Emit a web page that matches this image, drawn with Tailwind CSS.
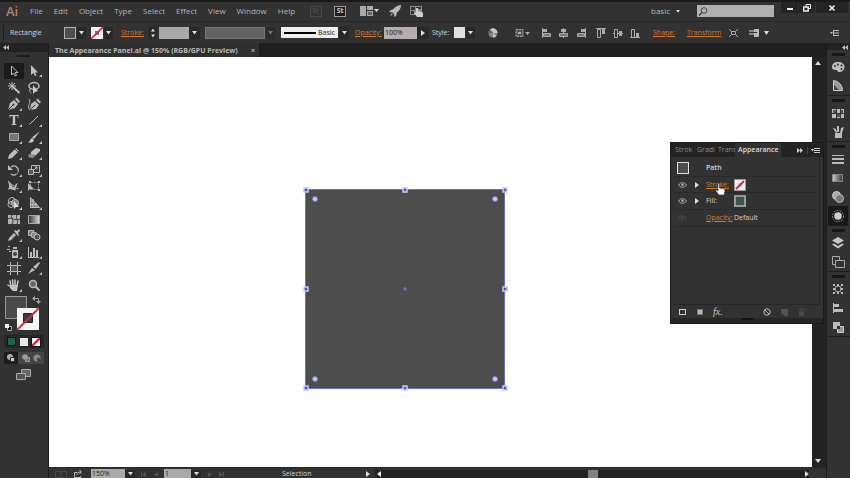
<!DOCTYPE html>
<html lang="en">
<head>
  <meta charset="UTF-8">
  <title>The Appearance Panel.ai</title>
  <meta name="viewport" content="width=device-width, initial-scale=1.0">
  <script src="https://cdn.jsdelivr.net/npm/@tailwindcss/browser@4"></script>
</head>

<body class="bg-[#222] font-['Open_Sans','Noto_Sans',sans-serif] text-[7px] leading-[10px] text-[#d4d4d4]">
<!-- shared shapes -->
<svg class="hidden">
  <symbol id="caret" viewBox="0 0 5 4"><path fill="#ddd" d="M0 0h5L2.500 3.500z"/></symbol>
  <symbol id="eye" viewBox="0 0 9 6"><path fill="none" stroke="#aaa" d="M.500 3c2-3 6-3 8 0-2 3-6 3-8 0z"/><circle cx="4.500" cy="2.800" r="1.200" fill="#aaa"/></symbol>
  <symbol id="play" viewBox="0 0 4 6"><path fill="#ddd" d="M0 0v6l4-3z"/></symbol>
  <symbol id="collapse" viewBox="0 0 6 5"><path fill="#bbb" d="M3 0v5L0 2.500zM6 0v5L3 2.500z"/></symbol>
</svg>

<div class="relative flex h-screen flex-col overflow-hidden">

  <!-- menu bar -->
  <header class="flex h-[22px] shrink-0 items-center border-t-2 border-b border-t-[#1a1a1a] border-b-[#262626] bg-[#323232] pb-px text-[8px] text-[#b4b4b4]">
    <span class="w-[30px] shrink-0 pl-[6px] text-[13px] leading-[18px] font-semibold text-[#b88468]">Ai</span>
    <nav class="flex gap-[11px]">
      <button>File</button>
      <button>Edit</button>
      <button>Object</button>
      <button>Type</button>
      <button>Select</button>
      <button>Effect</button>
      <button>View</button>
      <button>Window</button>
      <button>Help</button>
    </nav>
    <div class="ml-[15px] flex items-center">
      <button aria-label="Bridge" class="h-[11px] w-[12px] border border-[#484848] text-[7px] leading-[8px] text-[#555]">Br</button>
      <button aria-label="Stock" class="ml-[12px] h-[11px] w-[12px] border border-[#999] bg-[#1c1c1c] text-[7px] leading-[8px] font-bold text-[#ccc]">St</button>
      <button aria-label="Arrange documents" class="ml-[14px]">
        <svg class="h-[12px] w-[20px]" viewBox="0 0 20 12"><path fill="#aaa" d="M0 1h6v10H0zM7 1h6v4H7zM7 6h6v5H7z"/><path fill="#666" d="M8 7h4v3H8z"/><path fill="#ddd" d="M14 4h5l-2.500 3z"/></svg>
      </button>
      <button aria-label="GPU performance" class="ml-[9px]">
        <svg class="h-[12px] w-[12px]" viewBox="0 0 12 12"><path fill="#b8b8b8" d="M12 0C8 .5 6 2 4.500 4L1 5.500 0 7l3 .200L5 9l.300 3L7 11l1-3.500C10.500 5.500 12 3 12 0z"/><path fill="#999" d="M2.500 8 4 9.500 1 11.500z"/></svg>
      </button>
      <button aria-label="Touch workspace" class="ml-[9px]">
        <svg class="h-[12px] w-[14px]" viewBox="0 0 14 12"><path fill="#888" d="M0 1h12v9H0z"/><path fill="#333" d="M1 2h4v3H1zM6 2h5v2H6zM1 6h3v3H1z"/><path fill="#ccc" d="M6 3h2v3l4 1 1 1v4H7L4 8l1-1 1 1z"/></svg>
      </button>
    </div>
    <select aria-label="Workspace" class="ml-auto w-[20px] appearance-none">
      <option>basic</option>
    </select>
    <svg class="ml-[5px] h-[3px] w-[4px]"><use href="#caret"/></svg>
    <div class="ml-[17px] flex h-[12px] w-[77px] items-center bg-[#b0b0b0]">
      <svg class="ml-px h-[9px] w-[10px]" viewBox="0 0 10 9" fill="none" stroke="#444"><circle cx="6" cy="3.500" r="2.800"/><path d="M4 5.500 1 8.500" stroke-width="1.500"/></svg>
      <input aria-label="Search" class="w-[60px] text-[#222] outline-none">
    </div>
    <div class="mr-[2px] ml-[7px] flex h-[11px] gap-px self-start">
      <button aria-label="Minimize" class="grid w-[17px] place-items-center bg-[#242424]">
        <svg class="h-[8px] w-[8px]" viewBox="0 0 8 8"><path fill="#eee" d="M1 4h6v2H1z"/></svg>
      </button>
      <button aria-label="Restore" class="grid w-[16px] place-items-center bg-[#242424]">
        <svg class="h-[8px] w-[8px]" viewBox="0 0 8 8" fill="none" stroke="#eee"><path d="M3 2.500V.500h4.500v4H6"/><path stroke-width="1.500" d="M.700 3h4.500v4H.700z"/></svg>
      </button>
      <button aria-label="Close" class="grid w-[32px] place-items-center bg-[#242424]">
        <svg class="h-[8px] w-[8px]" viewBox="0 0 8 8"><path stroke="#eee" stroke-width="1.600" d="m1.500 1.500 5 5m0-5-5 5"/></svg>
      </button>
    </div>
  </header>

  <!-- control bar -->
  <div class="flex h-[21px] shrink-0 items-center bg-[#323232] pl-[3px]">
    <div class="h-[15px] w-px shrink-0 bg-[#1e1e1e]"></div>
    <span class="ml-[6px] w-[54px] shrink-0">Rectangle</span>
    <button aria-label="Fill colour" class="h-[12px] w-[12px] shrink-0 border border-[#b0b0b0] bg-[#4e4e4e]"></button>
    <button aria-label="Fill options" class="ml-px grid h-[12px] w-[9px] shrink-0 place-items-center bg-[#282828]"><svg class="h-[4px] w-[5px]"><use href="#caret"/></svg></button>
    <button aria-label="Stroke colour" class="ml-[5px] shrink-0"><svg class="h-[12px] w-[12px]" viewBox="0 0 12 12"><path fill="#f4f4f4" d="M0 0h12v12H0z"/><path fill="#777" d="M4 4h4v4H4z"/><path stroke="#d02840" stroke-width="1.600" d="M0 12 12 0"/></svg></button>
    <button aria-label="Stroke options" class="ml-px grid h-[12px] w-[9px] shrink-0 place-items-center bg-[#282828]"><svg class="h-[4px] w-[5px]"><use href="#caret"/></svg></button>
    <label for="weight" class="ml-[8px] w-[28px] shrink-0 text-[#d07a30] underline">Stroke:</label>
    <button aria-label="Change weight" class="shrink-0"><svg class="h-[12px] w-[8px]" viewBox="0 0 8 12"><path fill="#282828" d="M0 0h8v12H0z"/><path fill="#ddd" d="M2 4.500h4L4 1.500zM2 7.500h4l-2 3z"/></svg></button>
    <input id="weight" class="ml-[2px] h-[12px] w-[30px] shrink-0 bg-[#a8a8a8] text-[#222]">
    <button aria-label="Weights" class="grid h-[12px] w-[11px] shrink-0 place-items-center bg-[#282828]"><svg class="h-[4px] w-[5px]"><use href="#caret"/></svg></button>
    <input aria-label="Width profile" disabled class="ml-[5px] h-[12px] w-[60px] shrink-0 border border-[#777] bg-[#626262]">
    <button aria-label="Profiles" class="ml-px grid h-[12px] w-[9px] shrink-0 place-items-center bg-[#2c2c2c]"><svg class="h-[4px] w-[5px] opacity-40"><use href="#caret"/></svg></button>
    <button class="ml-[6px] flex h-[11px] w-[57px] shrink-0 items-center gap-[2px] bg-[#eee] pl-[3px] text-[#222]"><span class="h-[2px] w-[32px] bg-black"></span>Basic</button>
    <button aria-label="Brushes" class="ml-px grid h-[12px] w-[10px] shrink-0 place-items-center bg-[#282828]"><svg class="h-[4px] w-[5px]"><use href="#caret"/></svg></button>
    <label for="opacity" class="ml-[6px] w-[29px] shrink-0 text-[#d07a30] underline">Opacity:</label>
    <input id="opacity" value="100%" class="h-[12px] w-[33px] shrink-0 bg-[#b4aeae] pl-px text-[#222]">
    <button aria-label="Opacity slider" class="grid h-[12px] w-[12px] shrink-0 place-items-center bg-[#282828]"><svg class="h-[6px] w-[4px]"><use href="#play"/></svg></button>
    <label for="style" class="ml-[3px] w-[22px] shrink-0">Style:</label>
    <button id="style" class="h-[11px] w-[11px] shrink-0 bg-[#e0e0e0]"></button>
    <button aria-label="Styles" class="ml-px grid h-[12px] w-[9px] shrink-0 place-items-center bg-[#282828]"><svg class="h-[4px] w-[5px]"><use href="#caret"/></svg></button>

    <button aria-label="Recolor artwork" class="ml-[13px] shrink-0"><svg class="h-[10px] w-[10px]" viewBox="0 0 10 10"><circle cx="5" cy="5" r="4.500" fill="#888"/><path fill="#c4c4c4" d="M5 5 2 1.500A4.500 4.500 0 0 1 9.500 5zM5 5v4.500A4.500 4.500 0 0 0 8.500 8z"/><path fill="#666" d="M5 5H.500A4.500 4.500 0 0 1 2 1.500z"/></svg></button>
    <button aria-label="Align to" class="ml-[17px] shrink-0"><svg class="h-[10px] w-[15px]" viewBox="0 0 15 10"><path fill="#555" stroke="#aaa" stroke-dasharray="2 1" d="M1 1.500h7v7H1z"/><path fill="#aaa" d="M3 4h3v2H3zM10 4h5l-2.500 3z"/></svg></button>

    <div class="ml-[12px] flex shrink-0 gap-[7px]">
      <button aria-label="Align left"><svg class="h-[10px] w-[10px]" viewBox="0 0 10 10"><path fill="#aaa" d="M0 0h1v10H0zM1 1h4v3H1z"/><path fill="#777" stroke="#aaa" d="M1.500 5.500h7v3h-7z"/></svg></button>
      <button aria-label="Align centre"><svg class="h-[10px] w-[10px]" viewBox="0 0 10 10"><path fill="#aaa" d="M4 0h1v10H4zM2 1h5v3H2z"/><path fill="#777" stroke="#aaa" d="M.500 5.500h8v3h-8z"/></svg></button>
      <button aria-label="Align right"><svg class="h-[10px] w-[10px]" viewBox="0 0 10 10"><path fill="#aaa" d="M9 0h1v10H9zM5 1h4v3H5z"/><path fill="#777" stroke="#aaa" d="M1.500 5.500h7v3h-7z"/></svg></button>
    </div>
    <div class="ml-[10px] flex shrink-0 gap-[7px]">
      <button aria-label="Align top"><svg class="h-[10px] w-[10px]" viewBox="0 0 10 10"><path fill="#aaa" d="M0 0h10v1H0zM6 1h3v5H6z"/><path fill="none" stroke="#aaa" d="M1.500 1.500h3v8h-3z"/></svg></button>
      <button aria-label="Align middle"><svg class="h-[10px] w-[10px]" viewBox="0 0 10 10"><path fill="#aaa" d="M0 5h10v1H0zM6 3h3v5H6z"/><path fill="#323232" stroke="#aaa" d="M1.500 1.500h3v8h-3z"/></svg></button>
      <button aria-label="Align bottom"><svg class="h-[10px] w-[10px]" viewBox="0 0 10 10"><path fill="#aaa" d="M0 9h10v1H0zM6 5h3v4H6z"/><path fill="none" stroke="#aaa" d="M1.500 1.500h3v8h-3z"/></svg></button>
    </div>

    <a href="#" class="ml-[13px] w-[34px] shrink-0 text-[#d07a30] underline">Shape:</a>
    <a href="#" class="w-[41px] shrink-0 text-[#d07a30] underline">Transform</a>
    <button aria-label="Isolate" class="shrink-0"><svg class="h-[10px] w-[11px]" viewBox="0 0 11 10" fill="none" stroke="#aaa"><path d="M3.500 3.500h4v3h-4zM1 1l2.500 2.500M10 1 7.500 3.500M1 9l2.500-2.500M10 9 7.500 6.500"/></svg></button>
    <button aria-label="Select similar" class="ml-[10px] shrink-0"><svg class="h-[10px] w-[20px]" viewBox="0 0 20 10"><path fill="#888" d="M0 2h6v2H0zM0 5h6v2H0z"/><path fill="#bbb" d="M5 1h5v3H5zM5 5h4v4H5zM10 2v7l-3-3z"/><path fill="#ddd" d="M15 3h5l-2.500 4z"/></svg></button>
    <button aria-label="Panel menu" class="mr-[11px] ml-auto shrink-0"><svg class="h-[8px] w-[9px]" viewBox="0 0 9 8" fill="#bbb"><path d="M0 3h3L1.500 5zM4 1h5v1H4zM4 3.500h5v1H4zM4 6h5v1H4zM3 1h1v6H3z"/></svg></button>
  </div>

  <div class="flex min-h-0 flex-1">

    <!-- tools -->
    <aside class="flex w-[49px] shrink-0 flex-col border-r border-[#1c1c1c] bg-[#323232]">
      <button aria-label="Collapse tools" class="h-[9px] w-full shrink-0 bg-[#222] pl-[3px]"><svg class="h-[5px] w-[6px]"><use href="#collapse"/></svg></button>
      <div class="mt-[3px] mb-[6px] ml-[17px] h-[2px] w-[13px] shrink-0 bg-[#1c1c1c]"></div>

      <div class="ml-[4px] grid h-[230px] w-[40px] shrink-0 grid-cols-2 grid-rows-14 [&_button]:grid [&_button]:place-items-center [&_svg]:h-[14px] [&_svg]:w-[16px]">
        <button aria-label="Selection" class="bg-[#1b1b1b]"><svg viewBox="0 0 16 14" fill="none" stroke="#c0c0c0"><path d="M5.500 2v9l2-2 1.500 3 1.500-.700-1.300-2.800H12z"/></svg></button>
        <button aria-label="Direct selection"><svg viewBox="0 0 16 14" fill="#c0c0c0"><path d="M5 1v10l2.500-2 1.500 3 1.500-.700L9 8.500h3zM13 13h3v-3z"/></svg></button>
        <button aria-label="Magic wand"><svg viewBox="0 0 16 14" stroke="#c0c0c0" fill="none"><path stroke-width="2" d="m7 6 6.500 6"/><path d="M6 1v8M2 5h8M3 2l6 6M9 2 3 8"/></svg></button>
        <button aria-label="Lasso"><svg viewBox="0 0 16 14" fill="none" stroke="#bbb"><ellipse cx="8" cy="5" rx="5" ry="3.500" stroke-width="1.500"/><path d="M4 8c-1 2 0 3 1.500 4"/><path fill="#ccc" stroke="none" d="M7 4v9l2-2 3-1z"/></svg></button>
        <button aria-label="Pen"><svg viewBox="0 0 16 14" fill="#bbb"><path d="M2 13 4 6l4-3 4 4-3 4zM9 2l1.500-1.500L14 4.500 12.500 6zM13 14h3v-3z"/><path stroke="#323232" d="m2 13 5-5"/><circle cx="7.500" cy="7.500" r="1" fill="#323232"/></svg></button>
        <button aria-label="Curvature"><svg viewBox="0 0 16 14" fill="#bbb"><path d="m4 13 1-6 4-3 4 4-3 4zM10 3l1.500-1.500L15 5l-1.500 1.500z"/><path fill="none" stroke="#bbb" d="M4 13C0 8 6 7 3 2"/><path stroke="#323232" d="m4 13 5-5"/></svg></button>
        <button aria-label="Type"><svg viewBox="0 0 16 14" fill="#ccc"><text x="8" y="12" text-anchor="middle" font-family="Liberation Serif, serif" font-size="14" font-weight="bold">T</text><path d="M13 14h3v-3z"/></svg></button>
        <button aria-label="Line"><svg viewBox="0 0 16 14"><path stroke="#bbb" d="M3.500 11.500 12 3"/><path fill="#bbb" d="M13 14h3v-3z"/></svg></button>
        <button aria-label="Rectangle"><svg viewBox="0 0 16 14"><path fill="#777" stroke="#aaa" d="M3.500 3.500h9v7h-9z"/><path fill="#bbb" d="M13 14h3v-3z"/></svg></button>
        <button aria-label="Paintbrush"><svg viewBox="0 0 16 14" fill="#c8c8c8"><path d="M14 1 8 9 6 7.500zM6 8l2 2c-1 3-4 3-6 2 2 0 2-3 4-4zM13 14h3v-3z"/></svg></button>
        <button aria-label="Pencil"><svg viewBox="0 0 16 14" fill="#bbb"><path d="m2 13 1-4 7-7 3 3-7 7zM13 14h3v-3z"/><path stroke="#323232" d="m9 3 3 3"/></svg></button>
        <button aria-label="Eraser"><svg viewBox="0 0 16 14"><path fill="#888" d="m2 9 4-2 5 1-4 4-4-.500z"/><path fill="#c4c4c4" d="m5 6 5-4 4 1v2l-4 4-5-1z"/><path fill="#bbb" d="M13 14h3v-3z"/></svg></button>
        <button aria-label="Rotate"><svg viewBox="0 0 16 14"><path fill="none" stroke="#bbb" stroke-width="1.300" d="M5 4a4.500 4.500 0 1 1 0 7" stroke-dasharray="11 1 1 1"/><path fill="#bbb" d="M2 2v5h5zM13 14h3v-3z"/></svg></button>
        <button aria-label="Scale"><svg viewBox="0 0 16 14" fill="none" stroke="#bbb"><path d="M5.500 2.500h8v7h-8z"/><path fill="#555" d="M2.500 6.500h5v5h-5z"/><path d="m8 7 3-3M8.500 4H11v2.500"/><path fill="#bbb" stroke="none" d="M13 14h3v-3z"/></svg></button>
        <button aria-label="Width"><svg viewBox="0 0 16 14"><path fill="#bbb" d="M2 3c3 0 3 4 5 5s2-4 5-4c-2 2-1 6-4 7-3 0-3-2-6 0 1-3 2-4 0-8z"/><path fill="none" stroke="#bbb" d="M2 2c2 1 3 4 6 5M8 11c2 0 3-3 5-1"/><path fill="#bbb" d="M13 14h3v-3z"/></svg></button>
        <button aria-label="Free transform"><svg viewBox="0 0 16 14"><path fill="none" stroke="#999" stroke-dasharray="2 1" d="M4.500 3.500h8v7h-8z"/><path fill="#bbb" d="M3 2h2v2H3zM12 2h2v2h-2zM12 10h2v2h-2zM2 4v8l2-2h4z"/></svg></button>
        <button aria-label="Shape builder"><svg viewBox="0 0 16 14" fill="none" stroke="#bbb"><circle cx="6" cy="5" r="3.500"/><circle cx="9" cy="7" r="3.500" fill="#777"/><circle cx="5" cy="8.500" r="3"/><path fill="#ddd" stroke="none" d="M8 5v8l2-2h3zM13 14h3v-3z"/></svg></button>
        <button aria-label="Perspective grid"><svg viewBox="0 0 16 14" fill="none" stroke="#bbb"><path fill="#777" d="M4.500 1.500v10h9zM7 3v9M10 7v5M4 5h4M4 8.500h7"/><path fill="#bbb" stroke="none" d="M13 14h3v-3z"/></svg></button>
        <button aria-label="Mesh"><svg viewBox="0 0 16 14"><path fill="#b4b4b4" d="M2 3h12v9H2z"/><path fill="none" stroke="#333" d="M2 7c4-3 7 3 12 0M6 3c-2 4 3 5 0 9M11 3c-2 4 2 5 0 9"/></svg></button>
        <button aria-label="Gradient"><svg viewBox="0 0 16 14"><defs><linearGradient id="gt"><stop stop-color="#333"/><stop offset="1" stop-color="#ddd"/></linearGradient></defs><path fill="url(#gt)" stroke="#aaa" d="M2.500 3.500h11v8h-11z"/></svg></button>
        <button aria-label="Eyedropper"><svg viewBox="0 0 16 14" fill="#bbb"><path d="m2 13 1-3 5-5 2 2-5 5zM8 3l1-1 2 1 2-2 1 2-2 2 1 2-1 1zM13 14h3v-3z"/></svg></button>
        <button aria-label="Blend"><svg viewBox="0 0 16 14" stroke="#bbb"><path fill="#777" d="M2.500 2.500h5v5h-5z"/><circle cx="8" cy="7" r="3" fill="#888"/><circle cx="11" cy="9" r="3" fill="#555"/></svg></button>
        <button aria-label="Symbol sprayer"><svg viewBox="0 0 16 14" fill="#bbb"><path d="M6 5h6v8H6zM7 2h4v2H7zM2 1h2v1H2zM1 4h3v1H1zM3 6h2v1H3zM13 14h3v-3z"/><circle cx="9" cy="9" r="2" fill="#444"/></svg></button>
        <button aria-label="Graph"><svg viewBox="0 0 16 14" fill="#bbb"><path d="M2 2h1v10h10v1H2zM4 7h2v5H4zM7 3h2v9H7zM10 5h2v7h-2zM13 14h3v-3z"/></svg></button>
        <button aria-label="Artboard"><svg viewBox="0 0 16 14" fill="none" stroke="#bbb"><path fill="#555" d="M4.500 4.500h7v6h-7z"/><path d="M4.500 1v3M11.500 1v3M4.500 11v3M11.500 11v3M1 4.500h3M12 4.500h3M1 10.500h3M12 10.500h3"/></svg></button>
        <button aria-label="Slice"><svg viewBox="0 0 16 14" fill="#bbb"><path d="m2 13 4-6 3 2zM7 6l6-5 1 1-4 6zM13 14h3v-3z"/></svg></button>
        <button aria-label="Hand"><svg viewBox="0 0 16 14"><path fill="none" stroke="#c4c4c4" stroke-width="1.500" stroke-linecap="round" d="M5 8 4 3M7 7 6.500 2M9 7V2M11 8l1-5M5 9 2 7"/><path fill="#c4c4c4" d="M4 7h8l-1 6H7L4 10zM13 14h3v-3z"/></svg></button>
        <button aria-label="Zoom"><svg viewBox="0 0 16 14"><circle cx="7" cy="6" r="3.500" fill="#666" stroke="#bbb" stroke-width="1.500"/><path stroke="#bbb" stroke-width="2" d="m9.500 8.500 4 4"/></svg></button>
      </div>

      <!-- fill and stroke -->
      <div class="ml-[4px] flex w-[40px] shrink-0 flex-col">
        <svg class="h-[39px] w-[40px]" viewBox="0 0 40 39">
          <path fill="#4a4a4a" stroke="#999" d="M1.500 3.500h21v22h-21z"/>
          <path fill="#f6f6f6" d="M13 15h22v22H13z"/>
          <path fill="#3c3c3c" stroke="#222" d="M19.500 20.500h9v9h-9z"/>
          <path stroke="#d02838" stroke-width="1.800" d="M13 37 35 15"/>
          <path fill="none" stroke="#aaa" d="M30 5.500h4.500V9"/><path fill="#aaa" d="m28 5.500 3-2.500v5zM32 8h5l-2.500 3z"/>
          <path fill="#111" stroke="#aaa" d="M3.500 33.500h4v4h-4z"/><path fill="#eee" d="M1 31h4v4H1z"/>
        </svg>
        <div class="mt-[3px] flex h-[13px] items-center justify-between border border-[#242424] bg-[#2a2a2a] px-[2px]">
          <button aria-label="Color" class="h-[9px] w-[9px] border border-[#111] bg-[#1c6450]"></button>
          <button aria-label="Gradient fill" class="h-[8px] w-[8px] bg-[#e8e8e8]"></button>
          <button aria-label="None" class="bg-[#111] p-px"><svg class="h-[8px] w-[8px]" viewBox="0 0 8 8"><path fill="#f6f6f6" d="M0 0h8v8H0z"/><path stroke="#d01828" stroke-width="2" d="M0 8 8 0"/></svg></button>
        </div>
        <div class="mt-[4px] flex h-[12px] items-center justify-between bg-[#454545]">
          <button aria-label="Draw normal" class="grid h-full w-[14px] place-items-center bg-[#1c1c1c]"><svg class="h-[8px] w-[8px]" viewBox="0 0 8 8"><circle cx="3" cy="3" r="3" fill="#aaa"/><path fill="#ccc" stroke="#333" d="M3.500 3.500h4v4h-4z"/></svg></button>
          <button aria-label="Draw behind"><svg class="h-[8px] w-[8px]" viewBox="0 0 8 8"><path fill="#777" stroke="#999" d="M3.500 3.500h4v4h-4z"/><circle cx="3" cy="3" r="2.800" fill="#999"/></svg></button>
          <button aria-label="Draw inside" class="mr-[3px]"><svg class="h-[8px] w-[8px]" viewBox="0 0 8 8"><circle cx="4" cy="4" r="3.500" fill="#888"/><path fill="#444" d="M4 4h3v3H4z"/></svg></button>
        </div>
        <button aria-label="Screen mode" class="mt-[5px] mr-[2px] self-center"><svg class="h-[11px] w-[15px]" viewBox="0 0 15 11"><path fill="#666" stroke="#aaa" d="M5.500.500h9v7h-9z"/><path fill="#555" stroke="#aaa" d="M.500 4.500h9v6h-9z"/></svg></button>
      </div>
    </aside>

    <!-- document -->
    <main class="flex min-w-0 flex-1 flex-col">
      <div class="flex h-[14px] shrink-0 bg-[#1f1f1f]">
        <div class="flex w-[210px] items-center justify-between bg-[#303030] pt-px pr-[4px] pl-[6px] font-bold whitespace-nowrap text-[#b8b8b8]">
          <span>The Appearance Panel.ai @ 150% (RGB/GPU Preview)</span>
          <button aria-label="Close document">×</button>
        </div>
      </div>
      <div class="flex min-h-0 flex-1">
        <div class="relative min-w-0 flex-1 overflow-hidden bg-white">
          <svg class="absolute top-[127px] left-[251px] h-[210px] w-[210px]" viewBox="0 0 210 210">
            <path fill="#4d4d4d" stroke="#6674c8" d="M5.500 5.500h199v199H5.500z"/>
            <g fill="#4d58b0" stroke="#c4ccf8" stroke-width="1.500">
              <path d="M4 4h4v4H4zM103 4h4v4h-4zM203 4h4v4h-4zM4 103h4v4H4zM203 103h4v4h-4zM4 202h4v4H4zM103 202h4v4h-4zM203 202h4v4h-4z"/>
            </g>
            <g fill="#c4ccf8" stroke="#7480cc"><circle cx="15" cy="15" r="2.500"/><circle cx="195" cy="15" r="2.500"/><circle cx="15" cy="195" r="2.500"/><circle cx="195" cy="195" r="2.500"/></g>
            <circle cx="105" cy="105" r="1.700" fill="#6678d0"/>
          </svg>
        </div>
        <!-- vertical scrollbar -->
        <div class="flex w-[14px] shrink-0 flex-col items-center justify-between bg-[#232323] py-[4px] pr-[3px]">
          <button aria-label="Scroll up"><svg class="h-[4px] w-[6px]" viewBox="0 0 6 4"><path fill="#ddd" d="M0 4h6L3 0z"/></svg></button>
          <button aria-label="Scroll down"><svg class="h-[4px] w-[6px]" viewBox="0 0 6 4"><path fill="#ddd" d="M0 0h6L3 4z"/></svg></button>
        </div>
      </div>

      <!-- status bar -->
      <footer class="flex h-[11px] shrink-0 items-center border-t border-[#262626] bg-[#323232] pt-[2px]">
        <svg class="ml-[6px] h-[7px] w-[12px] shrink-0" viewBox="0 0 12 7"><path fill="none" stroke="#4a4a4a" d="M.500.500h11v6H.500zM6 0v7"/></svg>
        <button aria-label="Share" class="ml-[7px] shrink-0"><svg class="h-[8px] w-[8px]" viewBox="0 0 8 8" fill="none" stroke="#bbb"><path d="M3 2.500H.500v5h6V6M3 5c0-2 1-3 4-3M5.500 0 7.500 2l-2 2"/></svg></button>
        <input aria-label="Zoom level" value="150%" class="ml-[9px] h-[10px] w-[34px] shrink-0 bg-[#aaa] pl-px text-[#222]">
        <button aria-label="Zoom levels" class="grid h-full w-[10px] shrink-0 place-items-center bg-[#282828]"><svg class="h-[4px] w-[5px]"><use href="#caret"/></svg></button>
        <svg class="ml-[6px] h-[5px] w-[18px] shrink-0" viewBox="0 0 18 5"><path fill="#555" d="M0 0h1v5H0zM5 0v5L1 2.500zM17 0v5l-4-2.500z"/></svg>
        <input aria-label="Artboard number" value="1" class="ml-[5px] h-[10px] w-[27px] shrink-0 bg-[#aaa] pl-px text-[#222]">
        <button aria-label="Artboards" class="grid h-full w-[10px] shrink-0 place-items-center bg-[#282828]"><svg class="h-[4px] w-[5px]"><use href="#caret"/></svg></button>
        <svg class="ml-[7px] h-[5px] w-[18px] shrink-0" viewBox="0 0 18 5"><path fill="#555" d="M0 0v5l4-2.500zM11 0v5l4-2.500zM15 0h1v5h-1z"/></svg>
        <span class="ml-[56px] w-[84px] shrink-0">Selection</span>
        <button aria-label="Status menu" class="shrink-0"><svg class="h-[6px] w-[4px]"><use href="#play"/></svg></button>
        <div class="ml-[5px] flex h-full flex-1 items-center justify-between bg-[#222] pl-[2px]">
          <button aria-label="Scroll left"><svg class="h-[6px] w-[4px]" viewBox="0 0 4 6"><path fill="#eee" d="M4 0v6L0 3z"/></svg></button>
          <div class="h-full w-[10px] bg-[#808080]"></div>
          <button aria-label="Scroll right"><svg class="h-[6px] w-[4px]"><use href="#play"/></svg></button>
        </div>
        <div class="h-full w-[17px] shrink-0"></div>
      </footer>
    </main>

    <!-- panel dock -->
    <aside class="flex w-[24px] shrink-0 flex-col border-l border-[#1c1c1c] bg-[#323232] [&_button]:grid [&_button]:h-[19px] [&_button]:w-[20px] [&_button]:place-items-center [&_button_svg]:h-[14px] [&_button_svg]:w-[14px] [&_section]:border-b [&_section]:border-[#1e1e1e] [&_section]:pl-px">
      <div class="flex h-[7px] shrink-0 justify-end bg-[#222] pt-[2px] pr-[2px]"><svg class="h-[5px] w-[6px]"><use href="#collapse"/></svg></div>
      <section>
        <div class="h-[7px] pt-[3px] pl-[4px]"><div class="h-[3px] w-[13px] bg-[#181818]"></div></div>
        <button aria-label="Color"><svg viewBox="0 0 14 14"><path fill="#bbb" d="M7 2c4 0 6.500 2 6.500 5S11 12 8 12c-2 0-1-2-3-2s-4 0-4-3 2-5 6-5z"/><g fill="#333"><circle cx="4" cy="6" r="1"/><circle cx="7" cy="4.500" r="1"/><circle cx="10.500" cy="5.500" r="1"/><circle cx="10.500" cy="9" r="1"/></g></svg></button>
        <button aria-label="Color guide"><svg viewBox="0 0 14 14"><path fill="#999" stroke="#ccc" d="M2.500 1.500v10h9a10 10 0 0 0-9-10z"/><path fill="#444" d="M3 11V6l5 5z"/></svg></button>
      </section>
      <section>
        <div class="h-[7px] pt-[3px] pl-[4px]"><div class="h-[3px] w-[13px] bg-[#181818]"></div></div>
        <button aria-label="Swatches"><svg viewBox="0 0 14 14"><path fill="#bbb" d="M1 3h12v9H1z"/><path fill="#555" d="M2 4h3v3H2zM10 4h2v3h-2zM6 8h3v3H6z"/><path stroke="#333" d="M1 7.500h12M5.500 3v9M9.500 3v9"/></svg></button>
        <button aria-label="Brushes"><svg viewBox="0 0 14 14" fill="#bbb"><path d="M4 8h7v5H4zM6 1h2v6H6zM2 3l3 1 1 4H5zM10 3l3-1-2 6h-2z"/></svg></button>
      </section>
      <section>
        <div class="h-[7px] pt-[3px] pl-[4px]"><div class="h-[3px] w-[13px] bg-[#181818]"></div></div>
        <button aria-label="Stroke"><svg viewBox="0 0 14 14" fill="#bbb"><path d="M1 3h12v1H1zM1 6h12v2H1zM1 10h12v2H1z"/></svg></button>
        <button aria-label="Gradient"><svg viewBox="0 0 14 14"><defs><linearGradient id="gd"><stop stop-color="#ccc"/><stop offset="1" stop-color="#333"/></linearGradient></defs><path fill="url(#gd)" stroke="#888" d="M1.500 3.500h10v7h-10z"/></svg></button>
        <button aria-label="Transparency"><svg viewBox="0 0 14 14"><circle cx="5.500" cy="5.500" r="4" fill="#aaa" stroke="#ccc"/><circle cx="8.500" cy="8.500" r="4" fill="#777" stroke="#bbb"/></svg></button>
        <button aria-label="Appearance" class="bg-[#171717]"><svg viewBox="0 0 14 14"><circle cx="7" cy="7" r="3.800" fill="#ccc"/><circle cx="7" cy="7" r="5.500" fill="none" stroke="#888" stroke-dasharray="2 1"/></svg></button>
      </section>
      <section>
        <div class="h-[7px] pt-[3px] pl-[4px]"><div class="h-[3px] w-[13px] bg-[#181818]"></div></div>
        <button aria-label="Layers"><svg viewBox="0 0 14 14" fill="#c4c4c4"><path d="m7 1 6 3.500L7 8 1 4.500zM1 8.500l2-1L7 10l4-2.500 2 1L7 12.500z"/></svg></button>
        <button aria-label="Artboards"><svg viewBox="0 0 14 14" fill="none" stroke="#aaa"><path d="M1.500 1.500h7v8h-7z"/><path fill="#323232" d="M4.500 5.500h9v7h-9z"/></svg></button>
      </section>
      <section>
        <div class="h-[7px] pt-[3px] pl-[4px]"><div class="h-[3px] w-[13px] bg-[#181818]"></div></div>
        <button aria-label="Transform"><svg viewBox="0 0 14 14" fill="#bbb"><path d="M2 2h2v2H2zM6 2h2v2H6zM10 2h2v2h-2zM2 6h2v2H2zM10 6h2v2h-2zM2 10h2v2H2zM6 10h2v2H6zM10 10h2v2h-2z"/><path fill="none" stroke="#999" d="M4.500 4.500h5v5h-5z"/></svg></button>
        <button aria-label="Align"><svg viewBox="0 0 14 14" fill="#bbb"><path d="M2 2h1v10H2zM3 3h5v3H3zM3 8h9v3H3z"/></svg></button>
        <button aria-label="Pathfinder"><svg viewBox="0 0 14 14"><path fill="#bbb" d="M2 2h7v7H2z"/><path fill="#999" stroke="#ccc" d="M6.500 6.500h6v6h-6z"/><path fill="#333" d="M6 6h3v3H6z"/></svg></button>
      </section>
    </aside>
  </div>

  <!-- appearance panel -->
  <div class="absolute top-[142px] right-[26px] flex w-[154px] flex-col border border-[#1a1a1a] bg-[#323232]">
    <div class="flex h-[14px] items-stretch bg-[#232323] text-[#8c8c8c] [&_button]:overflow-hidden [&_button]:text-left [&_button]:whitespace-nowrap">
      <button class="ml-[4px] w-[18px]">Strok</button>
      <button class="ml-[4px] w-[18px]">Gradi</button>
      <button class="ml-[3px] w-[17px]">Trans</button>
      <button class="bg-[#323232] px-[3px] font-semibold text-[#ddd]">Appearance</button>
      <svg class="mr-[2px] ml-auto h-[14px] w-[24px] shrink-0" viewBox="0 0 24 14"><path fill="#ccc" d="M0 5v5l3-2.500zM3 5v5l3-2.500zM14 6h3l-1.500 2.500zM17 5h6v1h-6zM17 7h6v1h-6zM17 9h6v1h-6z"/><path fill="#444" d="M10 4h1v7h-1z"/></svg>
    </div>
    <div class="mx-[3px] flex h-[148px] flex-col border-r border-b border-[#262626]">
      <div class="flex h-[20px] items-center border-b border-[#2a2a2a] pt-[3px] pl-[3px]">
        <span class="h-[12px] w-[12px] border border-[#e0e0e0] bg-[#4e4e4e]"></span>
        <span class="ml-[17px] font-semibold">Path</span>
      </div>
      <div class="flex h-[16px] items-center border-b border-[#2a2a2a] pl-[4px]">
        <button aria-label="Toggle stroke"><svg class="h-[6px] w-[9px]"><use href="#eye"/></svg></button>
        <button aria-label="Expand stroke" class="ml-[8px]"><svg class="h-[6px] w-[4px]"><use href="#play"/></svg></button>
        <a href="#" class="ml-[7px] w-[28px] text-[#d07a30] underline">Stroke:</a>
        <svg class="h-[12px] w-[12px]" viewBox="0 0 12 12"><path fill="#eee" stroke="#999" d="M.500.500h11v11H.500z"/><path fill="#ccc" d="M4 4h4v4H4z"/><path stroke="#c82850" stroke-width="1.800" d="m2 10 8-8"/></svg>
      </div>
      <div class="flex h-[17px] items-center border-b border-[#2a2a2a] pl-[4px]">
        <button aria-label="Toggle fill"><svg class="h-[6px] w-[9px]"><use href="#eye"/></svg></button>
        <button aria-label="Expand fill" class="ml-[8px]"><svg class="h-[6px] w-[4px]"><use href="#play"/></svg></button>
        <a href="#" class="ml-[7px] w-[28px]">Fill:</a>
        <span class="h-[12px] w-[12px] border-2 border-[#999] bg-[#3c5648]"></span>
      </div>
      <div class="flex h-[17px] items-center border-b border-[#2a2a2a] pl-[4px]">
        <button aria-label="Toggle opacity"><svg class="h-[6px] w-[9px] opacity-20"><use href="#eye"/></svg></button>
        <a href="#" class="ml-[19px] w-[28px] text-[#d07a30] underline">Opacity:</a>
        <span>Default</span>
      </div>
    </div>
    <div class="flex h-[13px] items-center px-[8px]">
      <button aria-label="Add new stroke" class="h-[6px] w-[7px] border border-[#ccc]"></button>
      <button aria-label="Add new fill" class="ml-[11px] h-[6px] w-[6px] border border-[#777] bg-[#bbb]"></button>
      <button aria-label="Add new effect" class="ml-[10px] font-['Liberation_Serif',serif] text-[10px] leading-[10px] text-[#ccc] italic">fx.</button>
      <button aria-label="Clear appearance" class="ml-auto"><svg class="h-[8px] w-[8px]" viewBox="0 0 8 8" fill="none" stroke="#bbb"><circle cx="4" cy="4" r="3.200"/><path d="m2 2 4 4"/></svg></button>
      <button aria-label="Duplicate" class="ml-[10px]"><svg class="h-[8px] w-[7px]" viewBox="0 0 7 8"><path fill="#555" d="M0 1h7v7H4L0 5z"/></svg></button>
      <button aria-label="Delete" class="mr-[10px] ml-[10px]"><svg class="h-[8px] w-[7px]" viewBox="0 0 7 8"><path fill="#484848" d="M0 1h7v1H0zM1 3h5v5H1zM3 0h1v1H3z"/></svg></button>
    </div>
    <div class="flex h-[5px] justify-center bg-[#262626]"><span class="h-[2px] w-[12px] bg-[#111]"></span></div>
    <!-- hand cursor -->
    <svg class="absolute top-[40px] left-[44px] h-[13px] w-[11px]" viewBox="0 0 11 13"><path fill="#fff" stroke="#333" stroke-width=".600" d="M3 .500h1.500V5l5 1 .500 2-1 4H4L.500 7.500 1.500 7 3 8z"/></svg>
  </div>
</div>
</body>
</html>
